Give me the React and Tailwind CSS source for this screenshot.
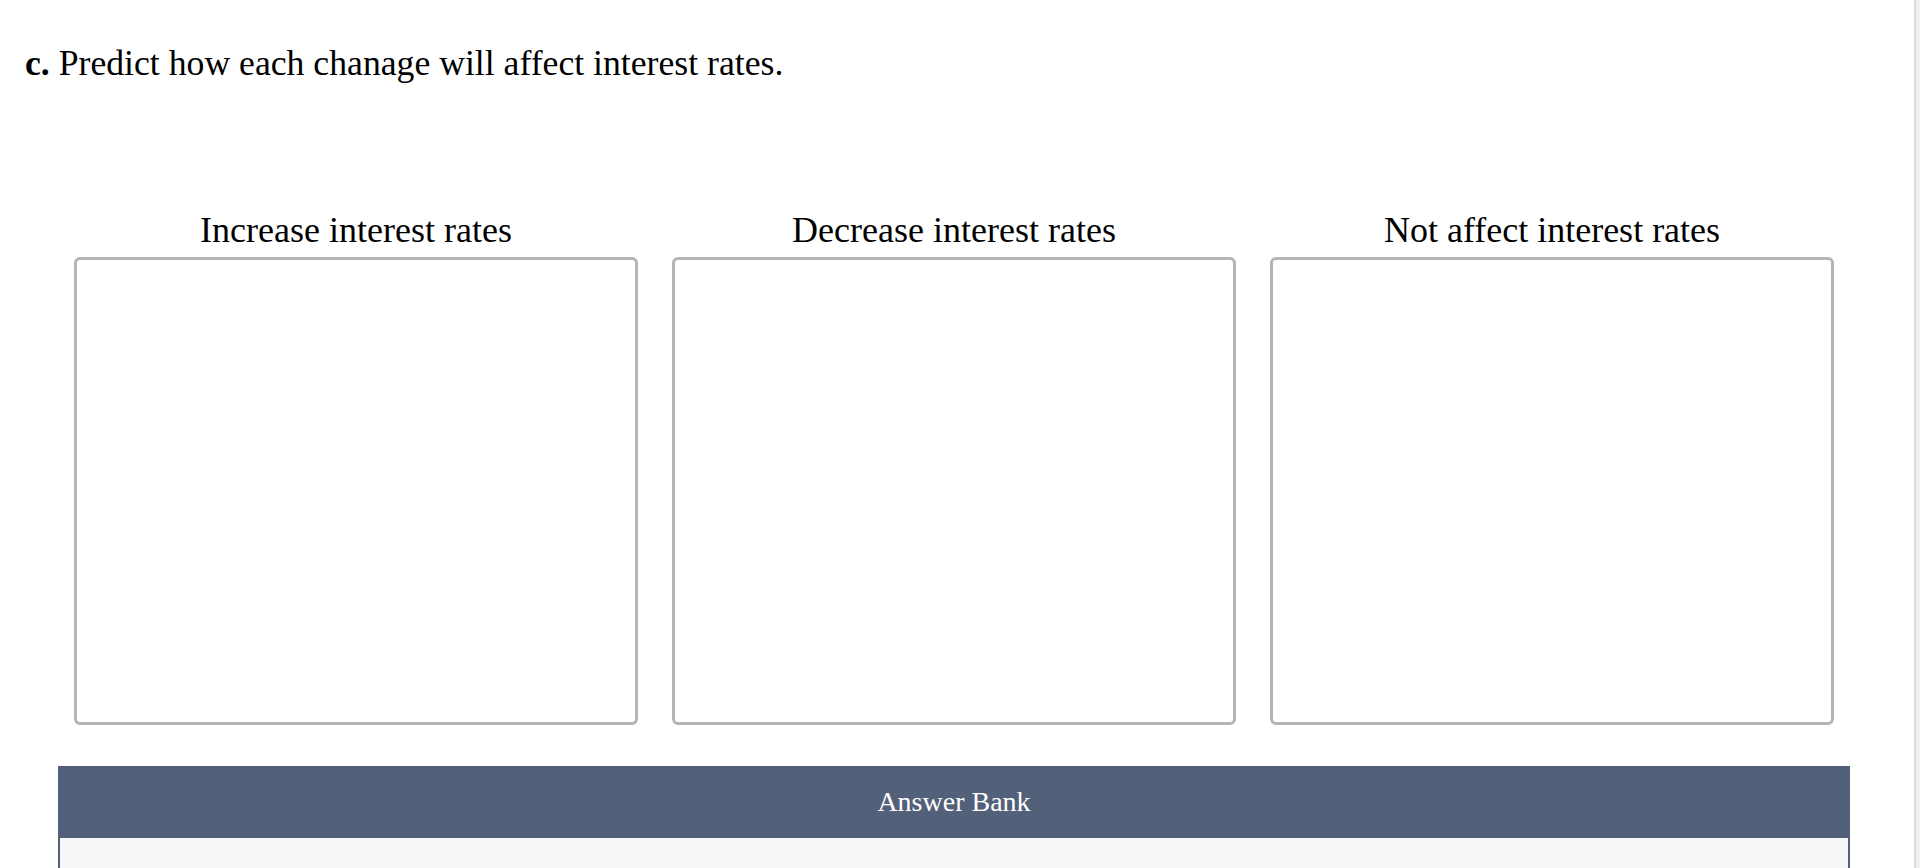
import React from "react";

const columns = [
  "Increase interest rates",
  "Decrease interest rates",
  "Not affect interest rates",
];

function App() {
  return (
    <div className="flex h-screen overflow-hidden bg-white" style={{ fontFamily: '"Liberation Serif", "Times New Roman", serif' }}>
      <div className="flex-1">
        {/* Question title */}
        <p className="pl-[25px] pt-[43px] text-[35.7px] leading-[41px] text-black">
          <b>c.</b> Predict how each chanage will affect interest rates.
        </p>

        {/* Drop targets */}
        <div className="mt-[126px] ml-[74px] grid w-[1760px] grid-cols-3 gap-x-[34px]">
          {columns.map((label) => (
            <div key={label} className="flex flex-col">
              <h2 className="mb-[6px] text-center text-[36px] leading-[41px] font-normal text-black">{label}</h2>
              <div className="h-[468px] rounded-[6px] border-[3px] border-[#b4b4b4] bg-white"></div>
            </div>
          ))}
        </div>

        {/* Answer bank */}
        <div className="mt-[41px] ml-[58px] w-[1792px]">
          <div className="flex h-[72px] items-center justify-center bg-[#526079] text-[28px] text-white">
            Answer Bank
          </div>
          <div className="h-[200px] border-x-2 border-b-2 border-[#526079] bg-[#f7f7f7]"></div>
        </div>
      </div>

      {/* scrollbar track */}
      <div className="w-[6px] shrink-0 border-l-[2px] border-[#dcdcdc] bg-[#f0f0f0]"></div>
    </div>
  );
}

export default App;
